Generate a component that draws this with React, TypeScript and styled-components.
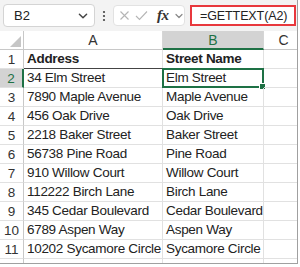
import React from 'react';
import styled, { createGlobalStyle } from 'styled-components';

const Global = createGlobalStyle`
  html, body { margin: 0; padding: 0; background: #fff; }
  body { font-family: "Liberation Sans", Arial, sans-serif; }
`;

const Frame = styled.div`
  width: 298px;
  height: 264px;
  box-sizing: border-box;
  border-right: 1px solid #a0a0a0;
  border-bottom: 1px solid #a0a0a0;
  overflow: hidden;
  background: #fff;
`;

const Toolbar = styled.div`
  height: 31px;
  box-sizing: border-box;
  background: #f3f3f3;
  display: flex;
  align-items: center;
  padding: 0 0 0 3px;
`;

const NameBox = styled.div`
  width: 92px;
  height: 23px;
  box-sizing: border-box;
  background: #fff;
  border: 1px solid #d4d4d4;
  border-radius: 4px;
  display: flex;
  align-items: center;
  justify-content: space-between;
  padding: 0 5px 0 10px;
  font-size: 13px;
  color: #222;
`;

const Dots = styled.div`
  width: 18px;
  display: flex;
  justify-content: center;
`;

const FxBox = styled.div`
  width: 72px;
  height: 21px;
  box-sizing: border-box;
  background: #fff;
  border: 1px solid #e2e2e2;
  border-radius: 4px;
  display: flex;
  align-items: center;
  padding: 0 0 0 5px;
  gap: 5px;
`;

const Fx = styled.span`
  font-family: "Liberation Serif", "Times New Roman", serif;
  font-style: italic;
  font-weight: 700;
  font-size: 15px;
  color: #333;
  margin-left: 4px;
  letter-spacing: -0.5px;
`;

const FormulaBar = styled.div`
  margin-left: 5px;
  width: 106px;
  height: 21px;
  box-sizing: border-box;
  background: #fff;
  border: 2px solid #e8383d;
  display: flex;
  align-items: center;
  padding-left: 8px;
  font-size: 12.5px;
  letter-spacing: -0.1px;
  color: #222;
`;

const Grid = styled.div`
  display: grid;
  grid-template-columns: 24px 139px 101px 40px;
  grid-auto-rows: 19px;
`;

const Cell = styled.div<{ $bold?: boolean; $darkBottom?: boolean }>`
  position: relative;
  box-sizing: border-box;
  border-right: 1px solid #e1e1e1;
  border-bottom: 1px solid ${p => (p.$darkBottom ? '#444' : '#e1e1e1')};
  padding-left: 3px;
  font-size: 13.5px;
  letter-spacing: -0.3px;
  line-height: 18px;
  white-space: nowrap;
  color: #222;
  font-weight: ${p => (p.$bold ? 700 : 400)};
`;

const ColHead = styled.div<{ $active?: boolean }>`
  box-sizing: border-box;
  border-right: 1px solid #d6d6d6;
  border-bottom: ${p => (p.$active ? '2px solid #1e7145' : '1px solid #c8c8c8')};
  background: ${p => (p.$active ? '#d3d3d3' : '#fff')};
  color: ${p => (p.$active ? '#1e7145' : '#333')};
  font-size: 14px;
  display: flex;
  align-items: center;
  justify-content: center;
`;

const Corner = styled.div`
  box-sizing: border-box;
  border-right: 1px solid #c8c8c8;
  border-bottom: 1px solid #c8c8c8;
  display: flex;
  align-items: flex-end;
  justify-content: flex-end;
  padding: 0 2px 2px 0;
`;

const RowHead = styled.div<{ $active?: boolean }>`
  box-sizing: border-box;
  border-right: ${p => (p.$active ? '2px solid #1e7145' : '1px solid #c8c8c8')};
  border-bottom: 1px solid #e1e1e1;
  background: ${p => (p.$active ? '#d3d3d3' : '#fff')};
  color: ${p => (p.$active ? '#1e7145' : '#333')};
  font-size: 13.5px;
  display: flex;
  align-items: center;
  justify-content: center;
`;

const Selection = styled.div`
  position: absolute;
  left: -1px;
  top: -1px;
  right: -1px;
  bottom: -1px;
  border: 2px solid #1e7145;
  pointer-events: none;
`;

const Handle = styled.div`
  position: absolute;
  right: -4px;
  bottom: -4px;
  width: 5px;
  height: 5px;
  background: #1e7145;
  border: 1px solid #fff;
`;

const rows: [string, string][] = [
  ['34 Elm Street', 'Elm Street'],
  ['7890 Maple Avenue', 'Maple Avenue'],
  ['456 Oak Drive', 'Oak Drive'],
  ['2218 Baker Street', 'Baker Street'],
  ['56738 Pine Road', 'Pine Road'],
  ['910 Willow Court', 'Willow Court'],
  ['112222 Birch Lane', 'Birch Lane'],
  ['345 Cedar Boulevard', 'Cedar Boulevard'],
  ['6789 Aspen Way', 'Aspen Way'],
  ['10202 Sycamore Circle', 'Sycamore Circle'],
];

const Chevron = ({ size = 12, color = '#444' }: { size?: number; color?: string }) => (
  <svg width={size} height={size} viewBox="0 0 10 10">
    <path d="M2 3.5 L5 6.5 L8 3.5" fill="none" stroke={color} strokeWidth="1.2" strokeLinecap="round" strokeLinejoin="round" />
  </svg>
);

const App: React.FC = () => {
  return (
    <Frame>
      <Global />
      <Toolbar>
        <NameBox>
          <span>B2</span>
          <Chevron />
        </NameBox>
        <Dots>
          <svg width="4" height="12" viewBox="0 0 4 12">
            <circle cx="2" cy="2" r="1.1" fill="#444" />
            <circle cx="2" cy="6" r="1.1" fill="#444" />
            <circle cx="2" cy="10" r="1.1" fill="#444" />
          </svg>
        </Dots>
        <FxBox>
          <svg width="11" height="11" viewBox="0 0 11 11">
            <path d="M1.5 1.5 L9.5 9.5 M9.5 1.5 L1.5 9.5" stroke="#b5b5b5" strokeWidth="1.1" />
          </svg>
          <svg width="13" height="11" viewBox="0 0 13 11">
            <path d="M1 6 L4.5 9.5 L12 1.5" fill="none" stroke="#b5b5b5" strokeWidth="1.1" />
          </svg>
          <Fx>fx</Fx>
          <Chevron size={10} color="#888" />
        </FxBox>
        <FormulaBar>=GETTEXT(A2)</FormulaBar>
      </Toolbar>
      <Grid>
        <Corner>
          <svg width="11" height="11" viewBox="0 0 11 11">
            <path d="M11 0 L11 11 L0 11 Z" fill="#c6c6c6" />
          </svg>
        </Corner>
        <ColHead>A</ColHead>
        <ColHead $active>B</ColHead>
        <ColHead>C</ColHead>

        <RowHead>1</RowHead>
        <Cell $bold $darkBottom>Address</Cell>
        <Cell $bold $darkBottom>Street Name</Cell>
        <Cell />

        {rows.map(([addr, street], i) => (
          <React.Fragment key={addr}>
            <RowHead $active={i === 0}>{i + 2}</RowHead>
            <Cell>{addr}</Cell>
            <Cell>
              {street}
              {i === 0 && (
                <Selection>
                  <Handle />
                </Selection>
              )}
            </Cell>
            <Cell />
          </React.Fragment>
        ))}

        <RowHead>12</RowHead>
        <Cell />
        <Cell />
        <Cell />
      </Grid>
    </Frame>
  );
};

export default App;
